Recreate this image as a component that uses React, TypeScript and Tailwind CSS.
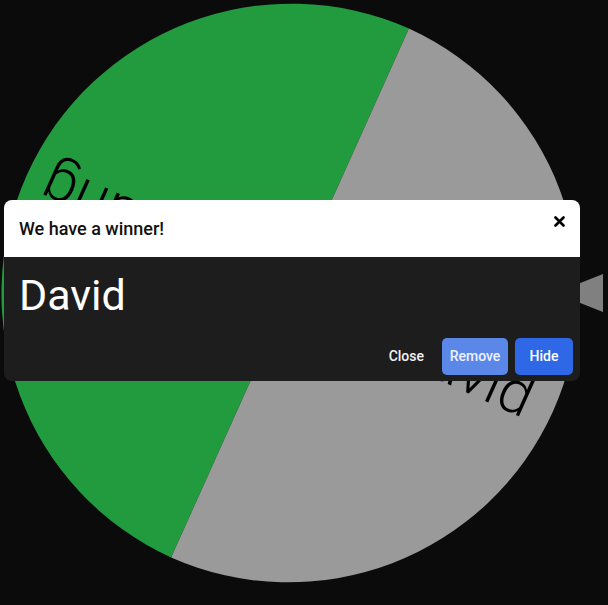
import React from "react";

const CX = 290;
const CY = 293;

function Wheel() {
  return (
    <svg width={608} height={605} viewBox="0 0 608 605" className="block">
      <path d="M290 293 L171.1 557.5 A290 290 0 0 1 408.9 28.5 Z" fill="#229a3e" />
      <path d="M290 293 L408.9 28.5 A290 290 0 0 1 171.1 557.5 Z" fill="#9a9a9a" />
      <text
        x={CX + 264}
        y={CY - 2}
        transform={`rotate(24.2 ${CX} ${CY})`}
        textAnchor="end"
        dominantBaseline="central"
        fontSize={60}
        fontWeight={300}
        fontFamily="Roboto, sans-serif"
        fill="#000"
      >
        David
      </text>
      <text
        x={CX + 270}
        y={CY}
        transform={`rotate(204.2 ${CX} ${CY})`}
        textAnchor="end"
        dominantBaseline="central"
        fontSize={60}
        fontWeight={300}
        fontFamily="Roboto, sans-serif"
        fill="#000"
      >
        Young
      </text>
      <polygon points="555,293 603,274 603,312" fill="#808080" />
    </svg>
  );
}

function WinnerDialog() {
  return (
    <div className="absolute left-[4px] top-[200px] w-[576px] rounded-[8px] overflow-hidden font-['Roboto',sans-serif]">
      <div className="relative h-[57px] bg-white flex items-center pl-[15px]">
        <h2 className="text-[18px] font-medium text-[#111]">We have a winner!</h2>
        <button className="absolute top-[15px] right-[15px] w-[12px] h-[12px] flex items-center justify-center">
          <svg width="11" height="11" viewBox="0 0 11 11">
            <path d="M1.5 1.5 L9.5 9.5 M9.5 1.5 L1.5 9.5" stroke="#000" strokeWidth="2.6" strokeLinecap="round" />
          </svg>
        </button>
      </div>
      <div className="bg-[#1d1d1d] pt-[17px] pl-[15px] pr-[7px] pb-[6px] flex flex-col">
        <div className="text-[43px] leading-none text-white">David</div>
        <div className="mt-[21px] flex justify-end items-center">
          <button className="mr-[18px] text-[14px] font-medium text-[#f2f2f2]">Close</button>
          <button className="w-[66px] h-[37px] rounded-[5px] bg-[#5b87e9] text-[14px] font-medium text-[#eef2ff]">
            Remove
          </button>
          <button className="ml-[7px] w-[58px] h-[37px] rounded-[5px] bg-[#2f68e6] text-[14px] font-medium text-white">
            Hide
          </button>
        </div>
      </div>
    </div>
  );
}

export default function App() {
  return (
    <div className="relative w-[608px] h-[605px] bg-[#0b0b0b] overflow-hidden">
      <Wheel />
      <WinnerDialog />
    </div>
  );
}
